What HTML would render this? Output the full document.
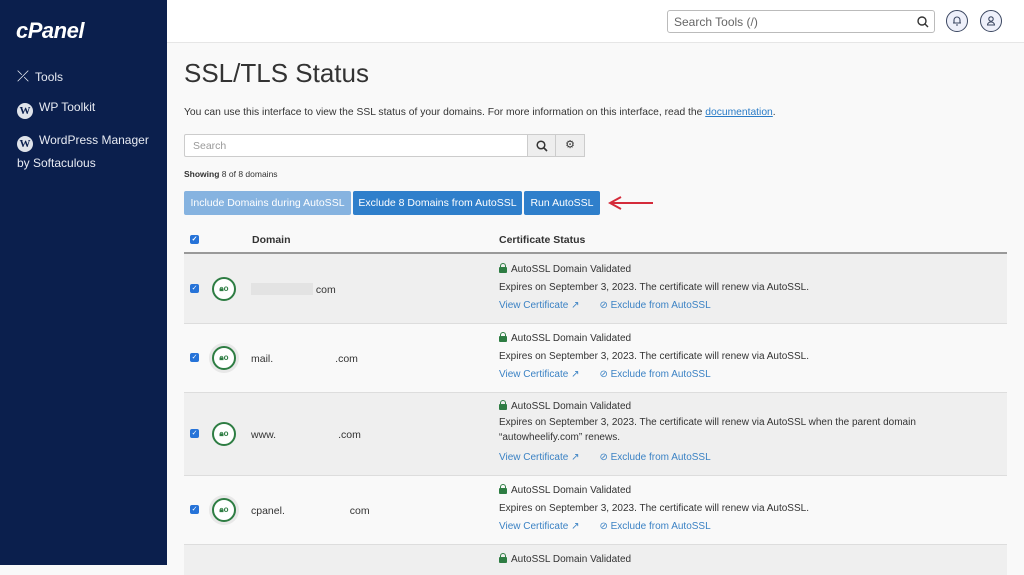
<!DOCTYPE html>
<html><head><meta charset="utf-8"><style>
*{box-sizing:border-box;margin:0;padding:0}
body{width:1024px;height:565px;overflow:hidden;font-family:"Liberation Sans",sans-serif;background:#f9f9f9;position:relative;color:#333}
.side{position:absolute;left:0;top:0;width:167px;height:565px;background:#0b1f4d;color:#fff}
.logo{position:absolute;left:16px;top:18px;font-size:22px;font-weight:bold;font-style:italic;letter-spacing:-0.5px}
.nav{position:absolute;left:17px;font-size:12px;color:#e8ebf3}
.wp{display:inline-block;width:16px;height:16px;border-radius:50%;background:#dfe3ea;color:#0b1f4d;font-size:11px;font-weight:bold;text-align:center;line-height:16px;font-family:"Liberation Serif",serif;vertical-align:-3px;margin-right:6px}
.top{position:absolute;left:167px;top:0;right:0;height:43px;background:#fff;border-bottom:1px solid #e6e6e6}
.ts{position:absolute;left:667px;top:10px;width:268px;height:23px;border:1px solid #bbb;border-radius:3px;background:#fff;font-size:12px;color:#666;padding:4px 6px}
.circ{position:absolute;top:10px;width:22px;height:22px;border-radius:50%;border:1px solid #3a4660;background:#eef0fa}
h1{position:absolute;left:184px;top:58px;font-weight:normal;font-size:26px;color:#333}
.p{position:absolute;left:184px;top:107px;font-size:10.3px;color:#333}
.p a{color:#2a7cc7}
.search{position:absolute;left:184px;top:134px;width:344px;height:23px;border:1px solid #ccc;background:#fff;font-size:10.5px;color:#999;padding:5px 8px;border-radius:2px 0 0 2px}
.sb{position:absolute;top:134px;height:23px;border:1px solid #ccc;background:#eee;text-align:center;font-size:11px;line-height:21px}
.show{position:absolute;left:184px;top:169px;font-size:8.5px}
.btn{position:absolute;top:191px;height:24px;color:#fff;font-size:10.5px;line-height:24px;text-align:center;border-radius:2px}
.hdr{position:absolute;left:184px;top:226px;width:823px;height:28px;border-bottom:2px solid #999;font-size:10.5px;font-weight:bold}
.row{position:absolute;left:184px;width:823px;border-bottom:1px solid #ddd}
.cb{position:absolute;left:6px;width:9px;height:9px;background:#2673d8;border-radius:2px;color:#fff;font-size:7px;line-height:9px;text-align:center}
.ic{position:absolute;left:25px;width:30px;height:30px;border-radius:50%;background:#e8e8e8}
.ic div{position:absolute;left:3px;top:3px;width:24px;height:24px;border-radius:50%;border:2px solid #2e7d43;background:#fff;font-size:8px;color:#2e7d43;text-align:center;line-height:20px;font-weight:bold}
.dom{position:absolute;left:67px;font-size:10.5px;color:#333}
.blur{display:inline-block;width:62px;height:12px;vertical-align:-2px}
.st{position:absolute;left:315px;font-size:10px;line-height:18px;color:#333}
.lk{color:#3b82c4}
.lock{display:inline-block;width:8px;height:6px;background:#2e7d43;border-radius:1px;position:relative;margin-right:4px;vertical-align:-1px}
.lock:before{content:"";position:absolute;left:1px;top:-4px;width:4px;height:4px;border:1px solid #2e7d43;border-bottom:none;border-radius:3px 3px 0 0}
.sp{display:inline-block;width:20px}
</style></head><body>
<div class="side">
<div class="logo">cPanel</div>
<div class="nav" style="top:68px"><span style="font-size:15px;margin-right:6px">⤫</span>Tools</div>
<div class="nav" style="top:100px"><span class="wp">W</span>WP Toolkit</div>
<div class="nav" style="top:129px;line-height:22px"><span class="wp">W</span>WordPress Manager<br>by Softaculous</div>
</div>
<div class="top"></div>
<div class="ts">Search Tools (/)<svg style="position:absolute;right:5px;top:5px" width="12" height="12"><circle cx="5" cy="5" r="4" stroke="#333" stroke-width="1.4" fill="none"/><path d="M8 8 L11 11" stroke="#333" stroke-width="1.4"/></svg></div>
<div class="circ" style="left:946px"><svg width="20" height="20"><path d="M7 12 V9 a3 3 0 0 1 6 0 V12 Z M6 12 H14 M9 14 H11" stroke="#3a4660" stroke-width="1.1" fill="none"/></svg></div>
<div class="circ" style="left:980px"><svg width="20" height="20"><circle cx="10" cy="8" r="2.2" stroke="#3a4660" stroke-width="1.1" fill="none"/><path d="M6.5 14 a3.5 3 0 0 1 7 0 Z" stroke="#3a4660" stroke-width="1.1" fill="none"/></svg></div>
<h1>SSL/TLS Status</h1>
<div class="p">You can use this interface to view the SSL status of your domains. For more information on this interface, read the <a style="text-decoration:underline">documentation</a>.</div>
<div class="search">Search</div>
<div class="sb" style="left:527px;width:29px"><svg width="12" height="12" style="margin-top:5px"><circle cx="5" cy="5" r="3.8" stroke="#333" stroke-width="1.5" fill="none"/><path d="M8 8 L11 11" stroke="#333" stroke-width="1.6"/></svg></div>
<div class="sb" style="left:555px;width:30px">⚙</div>
<div class="show"><b>Showing</b> 8 of 8 domains</div>
<div class="btn" style="left:184px;width:167px;background:#86b3e0">Include Domains during AutoSSL</div>
<div class="btn" style="left:353px;width:169px;background:#2f7fcb">Exclude 8 Domains from AutoSSL</div>
<div class="btn" style="left:524px;width:76px;background:#2f7fcb">Run AutoSSL</div>
<svg style="position:absolute;left:608px;top:195px" width="46" height="16"><path d="M13 2 L2 8 L13 14 M4 8 H45" stroke="#d42b3a" stroke-width="2" fill="none"/></svg>
<div class="hdr"><div class="cb" style="top:9px">✓</div><span style="position:absolute;left:68px;top:8px">Domain</span><span style="position:absolute;left:315px;top:8px">Certificate Status</span></div>

<div class="row" style="top:254px;height:70px;background:#efefef"><div class="cb" style="top:30px">✓</div><div class="ic" style="top:20px;background:transparent"><div>🔒︎o</div></div><div class="dom" style="top:29px"><span class="blur" style="background:#e3e3e3"></span>&nbsp;com</div>
<div class="st" style="top:7px"><span class="lock"></span>AutoSSL Domain Validated<br>Expires on September 3, 2023. The certificate will renew via AutoSSL.<br><span class="lk">View Certificate ↗</span><span class="sp"></span><span class="lk">⊘ Exclude from AutoSSL</span></div></div>

<div class="row" style="top:324px;height:69px;background:#f9f9f9"><div class="cb" style="top:29px">✓</div><div class="ic" style="top:19px"><div>🔒︎o</div></div><div class="dom" style="top:28px">mail.<span class="blur"></span>.com</div>
<div class="st" style="top:6px"><span class="lock"></span>AutoSSL Domain Validated<br>Expires on September 3, 2023. The certificate will renew via AutoSSL.<br><span class="lk">View Certificate ↗</span><span class="sp"></span><span class="lk">⊘ Exclude from AutoSSL</span></div></div>

<div class="row" style="top:393px;height:83px;background:#efefef"><div class="cb" style="top:36px">✓</div><div class="ic" style="top:26px;background:transparent"><div>🔒︎o</div></div><div class="dom" style="top:35px">www.<span class="blur"></span>.com</div>
<div class="st" style="top:6px;line-height:15.5px"><span class="lock"></span>AutoSSL Domain Validated<br>Expires on September 3, 2023. The certificate will renew via AutoSSL when the parent domain<br>“autowheelify.com” renews.<br><span class="lk" style="line-height:24px">View Certificate ↗</span><span class="sp"></span><span class="lk">⊘ Exclude from AutoSSL</span></div></div>

<div class="row" style="top:476px;height:69px;background:#f9f9f9"><div class="cb" style="top:29px">✓</div><div class="ic" style="top:19px"><div>🔒︎o</div></div><div class="dom" style="top:28px">cpanel.<span class="blur"></span>&nbsp;com</div>
<div class="st" style="top:6px"><span class="lock"></span>AutoSSL Domain Validated<br>Expires on September 3, 2023. The certificate will renew via AutoSSL.<br><span class="lk">View Certificate ↗</span><span class="sp"></span><span class="lk">⊘ Exclude from AutoSSL</span></div></div>

<div class="row" style="top:545px;height:30px;background:#efefef;border:none"><div class="st" style="top:6px"><span class="lock"></span>AutoSSL Domain Validated</div></div>
</body></html>
